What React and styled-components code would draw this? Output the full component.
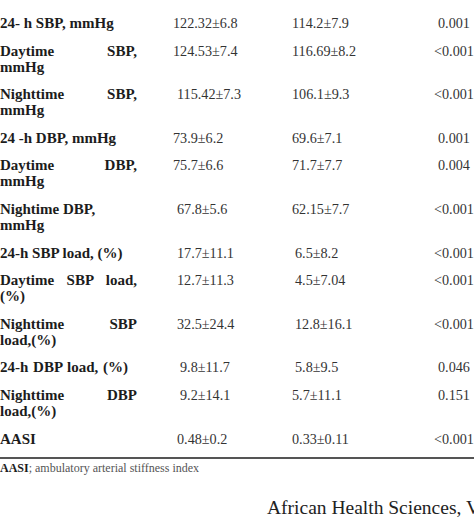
import React from 'react'
import styled, { createGlobalStyle } from 'styled-components'

const GlobalStyle = createGlobalStyle`
    html, body {
        margin:0;
        padding:0;
        background:#fff;
        overflow:hidden;
    }
`

const PageStyle = styled.div`
    width:474px;
    height:519px;
    overflow:hidden;
    font-family:'Liberation Serif', 'Times New Roman', serif;
    color:#333;
`

const TableStyle = styled.div`
    padding-top:9.2px;
    display:flex;
    flex-flow:column nowrap;
`

const RowStyle = styled.div`
    display:grid;
    grid-template-columns:173px 119px 142px 1fr;
    align-items:start;
    padding:5.8px 0;
    line-height:16px;
`

const LabelStyle = styled.div`
    width:137px;
    font-weight:bold;
    font-size:15px;
    color:#1c1c1c;
`

const LabelLine = styled.div`
    white-space:nowrap;
    text-align:left;
    text-align-last:${p => p.$spread ? 'justify' : 'left'};
    word-spacing:${p => p.$wide ? '1px' : '0'};
`

const ValueStyle = styled.div`
    font-size:14.2px;
    white-space:nowrap;
    padding-left:${p => p.$indent || 0}px;
`

const RuleStyle = styled.div`
    margin-top:4.6px;
    height:2px;
    background:#555;
`

const NoteStyle = styled.div`
    margin-top:2px;
    font-size:12px;
    line-height:14px;
    color:#555;
    white-space:nowrap;

    b {
        color:#1c1c1c;
    }
`

const JournalStyle = styled.div`
    margin-top:21.5px;
    padding-left:267px;
    font-size:19.5px;
    line-height:24px;
    color:#222;
    white-space:nowrap;
`

const rows = [
    { label: [['24- h SBP, mmHg']], a: ['122.32±6.8', 0], b: ['114.2±7.9', 0], p: ['0.001', 4] },
    { label: [['Daytime SBP,', true], ['mmHg']], a: ['124.53±7.4', 0], b: ['116.69±8.2', 0], p: ['<0.001', 0] },
    { label: [['Nighttime SBP,', true], ['mmHg']], a: ['115.42±7.3', 4], b: ['106.1±9.3', 0], p: ['<0.001', 0] },
    { label: [['24 -h DBP, mmHg']], a: ['73.9±6.2', 0], b: ['69.6±7.1', 0], p: ['0.001', 4] },
    { label: [['Daytime DBP,', true], ['mmHg']], a: ['75.7±6.6', 0], b: ['71.7±7.7', 0], p: ['0.004', 4] },
    { label: [['Nightime DBP,'], ['mmHg']], a: ['67.8±5.6', 4], b: ['62.15±7.7', 0], p: ['<0.001', 0] },
    { label: [['24-h SBP load, (%)']], a: ['17.7±11.1', 4], b: ['6.5±8.2', 3], p: ['<0.001', 0] },
    { label: [['Daytime SBP load,', true], ['(%)']], a: ['12.7±11.3', 4], b: ['4.5±7.04', 3], p: ['<0.001', 0] },
    { label: [['Nighttime SBP', true], ['load,(%)']], a: ['32.5±24.4', 4], b: ['12.8±16.1', 3], p: ['<0.001', 0] },
    { label: [['24-h DBP load,  (%)', false, true]], a: ['9.8±11.7', 7], b: ['5.8±9.5', 3], p: ['0.046', 4] },
    { label: [['Nighttime DBP', true], ['load,(%)']], a: ['9.2±14.1', 7], b: ['5.7±11.1', 0], p: ['0.151', 4] },
    { label: [['AASI']], a: ['0.48±0.2', 4], b: ['0.33±0.11', 0], p: ['<0.001', 0] },
]

const App = () => {
    return (
        <PageStyle>
            <GlobalStyle />
            <TableStyle>
                {
                    rows.map((r, i) => (
                        <RowStyle key={i}>
                            <LabelStyle>
                                {
                                    r.label.map(([text, spread, wide], j) => (
                                        <LabelLine key={j} $spread={spread} $wide={wide}>{text}</LabelLine>
                                    ))
                                }
                            </LabelStyle>
                            <ValueStyle $indent={r.a[1]}>{r.a[0]}</ValueStyle>
                            <ValueStyle $indent={r.b[1]}>{r.b[0]}</ValueStyle>
                            <ValueStyle $indent={r.p[1]}>{r.p[0]}</ValueStyle>
                        </RowStyle>
                    ))
                }
            </TableStyle>
            <RuleStyle />
            <NoteStyle><b>AASI</b>; ambulatory arterial stiffness index</NoteStyle>
            <JournalStyle>African Health Sciences, Vol 21 Issue 1, March, 2021</JournalStyle>
        </PageStyle>
    )
}

export default App
